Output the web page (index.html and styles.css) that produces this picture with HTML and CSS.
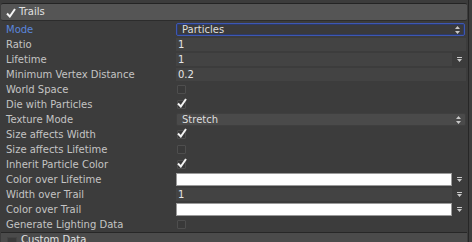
FILE: index.html
```html
<!DOCTYPE html>
<html>
<head>
<meta charset="utf-8">
<link rel="stylesheet" href="styles.css">
</head>
<body>
<div class="page">
  <div class="main">
    <div class="topline"></div>
    <div class="header">
      <svg class="hcheck" width="10" height="10" viewBox="0 0 10 10"><path d="M1 5.5 L3.8 8.5 L9 1" fill="none" stroke="#f4f4f4" stroke-width="2"/></svg><span class="htitle">Trails</span>
    </div>
    <div class="rows">
      <div class="row"><div class="label focus">Mode</div><div class="value"><div class="popup focused"><span>Particles</span><svg class="updown" width="5" height="8" viewBox="0 0 5 8"><path d="M0 3 L2.5 0 L5 3 Z M0 5 L2.5 8 L5 5 Z" fill="#c8c8c8"/></svg></div></div></div>
      <div class="row"><div class="label">Ratio</div><div class="value"><div class="num">1</div></div></div>
      <div class="row"><div class="label">Lifetime</div><div class="value split"><div class="num drop">1</div><div class="arrow"><svg width="5" height="5" viewBox="0 0 5 5"><path d="M0 0 H5 V1 H0 Z M0 2 L5 2 L2.5 5 Z" fill="#c8c8c8"/></svg></div></div></div>
      <div class="row"><div class="label">Minimum Vertex Distance</div><div class="value"><div class="num">0.2</div></div></div>
      <div class="row"><div class="label">World Space</div><div class="value"><div class="box"></div></div></div>
      <div class="row"><div class="label">Die with Particles</div><div class="value"><div class="box on"><svg width="10" height="10" viewBox="0 0 10 10"><path d="M1 5.5 L3.8 8.5 L9 1" fill="none" stroke="#f4f4f4" stroke-width="2"/></svg></div></div></div>
      <div class="row"><div class="label">Texture Mode</div><div class="value"><div class="popup"><span>Stretch</span><svg class="updown" width="5" height="8" viewBox="0 0 5 8"><path d="M0 3 L2.5 0 L5 3 Z M0 5 L2.5 8 L5 5 Z" fill="#c8c8c8"/></svg></div></div></div>
      <div class="row"><div class="label">Size affects Width</div><div class="value"><div class="box on"><svg width="10" height="10" viewBox="0 0 10 10"><path d="M1 5.5 L3.8 8.5 L9 1" fill="none" stroke="#f4f4f4" stroke-width="2"/></svg></div></div></div>
      <div class="row"><div class="label">Size affects Lifetime</div><div class="value"><div class="box"></div></div></div>
      <div class="row"><div class="label">Inherit Particle Color</div><div class="value"><div class="box on"><svg width="10" height="10" viewBox="0 0 10 10"><path d="M1 5.5 L3.8 8.5 L9 1" fill="none" stroke="#f4f4f4" stroke-width="2"/></svg></div></div></div>
      <div class="row"><div class="label">Color over Lifetime</div><div class="value split"><div class="color"></div><div class="arrow"><svg width="5" height="5" viewBox="0 0 5 5"><path d="M0 0 H5 V1 H0 Z M0 2 L5 2 L2.5 5 Z" fill="#c8c8c8"/></svg></div></div></div>
      <div class="row"><div class="label">Width over Trail</div><div class="value split"><div class="num drop">1</div><div class="arrow"><svg width="5" height="5" viewBox="0 0 5 5"><path d="M0 0 H5 V1 H0 Z M0 2 L5 2 L2.5 5 Z" fill="#c8c8c8"/></svg></div></div></div>
      <div class="row"><div class="label">Color over Trail</div><div class="value split"><div class="color"></div><div class="arrow"><svg width="5" height="5" viewBox="0 0 5 5"><path d="M0 0 H5 V1 H0 Z M0 2 L5 2 L2.5 5 Z" fill="#c8c8c8"/></svg></div></div></div>
      <div class="row"><div class="label">Generate Lighting Data</div><div class="value"><div class="box"></div></div></div>
    </div>
    <div class="header sub">
      <div class="hbox"></div><span class="htitle">Custom Data</span>
    </div>
  </div>
  <div class="scroll"></div>
</div>
</body>
</html>
```
FILE: styles.css
```css
html, body {
  margin: 0;
  padding: 0;
  background: #3c3c3c;
}
body {
  width: 472px;
  height: 242px;
  overflow: hidden;
  font-family: "DejaVu Sans", sans-serif;
  font-size: 10px;
  color: #c4c4c4;
}
.page {
  display: flex;
  height: 242px;
  overflow: hidden;
}
.main {
  width: 468px;
  display: flex;
  flex-direction: column;
  overflow: hidden;
}
.main > * {
  flex-shrink: 0;
}
.scroll {
  width: 3px;
  border-left: 1px solid #262626;
  background: #3e3e3e;
}
.topline {
  height: 3px;
  background: #3c3c3c;
}
.header {
  height: 16px;
  margin-left: 1px;
  margin-right: 1px;
  background: #555555;
  border-top: 1px solid #242424;
  border-bottom: 1px solid #2c2c2c;
  border-radius: 2px;
  display: flex;
  align-items: center;
  line-height: 16px;
}
.hcheck {
  margin-left: 5px;
  margin-right: 3px;
  margin-top: 1px;
}
.htitle {
  color: #e2e2e2;
}
.rows {
  padding-top: 1px;
  display: flex;
  flex-direction: column;
}
.row {
  height: 15px;
  display: grid;
  grid-template-columns: 176px 1fr;
  align-items: center;
}
.label {
  padding-left: 6px;
  line-height: 15px;
  white-space: nowrap;
}
.label.focus {
  color: #5a86dc;
}
.value {
  height: 13px;
  display: flex;
  align-items: center;
  padding-right: 2px;
}
.popup {
  flex: 1;
  height: 13px;
  box-sizing: border-box;
  background: #4a4a4a;
  border: 1px solid #3f3f3f;
  border-radius: 2px;
  display: flex;
  align-items: center;
  justify-content: space-between;
  padding: 0 4px 0 5px;
  color: #dedede;
  line-height: 11px;
}
.popup.focused {
  background: #3a3a3c;
  border: 1px solid #3d57b4;
  box-shadow: 0 0 0 1px #2d3a66 inset;
  margin-right: 1px;
}
.num {
  flex: 1;
  height: 13px;
  line-height: 13px;
  padding-left: 2px;
  background: #434343;
  color: #e6e6e6;
}
.split {
  padding-right: 2px;
}
.num.drop {
  flex: none;
  width: 274px;
}
.arrow {
  flex: 1;
  display: flex;
  justify-content: center;
  align-items: center;
  height: 13px;
}
.color {
  width: 276px;
  height: 13px;
  box-sizing: border-box;
  background: #ffffff;
  border: 1px solid #9a9a9a;
}
.box {
  width: 9px;
  height: 9px;
  margin-left: 1px;
  box-sizing: border-box;
  border: 1px solid #4e4e4e;
  background: #393939;
  border-radius: 1px;
  position: relative;
}
.box.on svg {
  position: absolute;
  left: -1px;
  top: -3px;
}
.header.sub {
  margin-top: 0;
  border-radius: 0;
  background: #4b4b4b;
  border-top: 1px solid #272727;
  justify-content: flex-start;
  align-items: flex-start;
}
.hbox {
  width: 8px;
  height: 8px;
  margin-left: 6px;
  margin-right: 4px;
  margin-top: 4px;
  background: #3a3a3a;
  border: 1px solid #444;
}
.header.sub .htitle {
  line-height: 14px;
}
```
